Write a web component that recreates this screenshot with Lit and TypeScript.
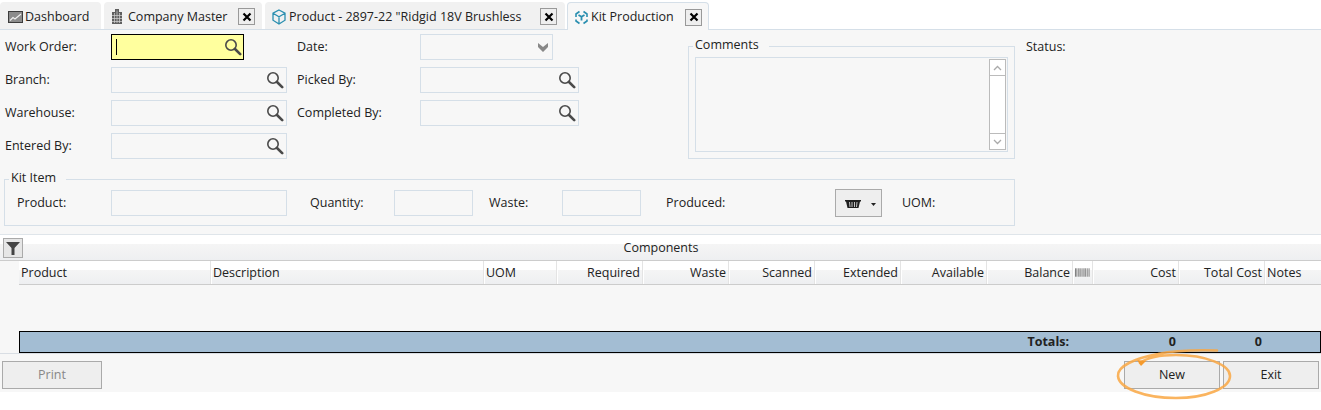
import { LitElement, html, css } from "lit";
import { customElement } from "lit/decorators.js";

const search = html`<svg class="search" width="18" height="18" viewBox="0 0 18 18"><circle cx="7" cy="7" r="5.200" fill="none" stroke="#4a4a4a" stroke-width="1.600"/><path d="M11 11l5.200 5.200" stroke="#4a4a4a" stroke-width="2.600" stroke-linecap="round"/></svg>`;
const cube = html`<svg class="ti m3" width="14" height="16" viewBox="0 0 14 16"><path d="M7 1l6 3.200v7L7 15l-6-3.800v-7zM1 4.200l6 3.500 6-3.500M7 7.700V15" fill="none" stroke="#2a8fb0" stroke-width="1.300"/></svg>`;
const kit = html`<svg class="ti m3" width="13" height="15" viewBox="0 0 13 15"><path d="M4.500 1.500L1 4v3M8.500 1.500L12 4v3M1 9.500V11l3.500 2.500M12 9.500V11l-3.500 2.500" fill="none" stroke="#2a8fb0" stroke-width="1.600"/><path d="M3.500 5l3 1.800L9.500 5M6.500 6.800V10.500" fill="none" stroke="#2a8fb0" stroke-width="1.800"/></svg>`;
const chart = html`<svg class="ti" width="15" height="12" viewBox="0 0 15 12"><rect x=".5" y=".5" width="14" height="11" fill="#8c8c8c" stroke="#3c3c3c"/><path d="M2 9.500l3-3 2 1.500 6-5" fill="none" stroke="#f2f2f2" stroke-width="1.100"/></svg>`;
const bldg = html`<svg class="ti m6" width="10" height="15" viewBox="0 0 10 15"><path d="M3 0h4v3h3v12H0V3h3z" fill="#5f5f5f"/><path d="M2.500 4v10M5 1.500V14M7.500 4v10M0 6.500h10M0 9.500h10M0 12.500h10" stroke="#d6d6d6" stroke-width=".7"/></svg>`;
const close = html`<span class="x"><svg width="10" height="10" viewBox="0 0 10 10"><path d="M1.500 1.500l7 7M8.500 1.500l-7 7" stroke="#000" stroke-width="2.200"/></svg></span>`;

@customElement("app-root")
export class AppRoot extends LitElement {
  static styles = css`
    :host { display:block; width:1321px; height:410px; background:#fff; font:12.5px/16px "Open Sans","Noto Sans",sans-serif; color:#222; position:relative; overflow:hidden; }
    * { box-sizing:border-box; }
    .page { height:392px; background:#f7f7f7; }
    .tabs { height:30px; background:#fff; border-bottom:1px solid #d5dfe8; display:flex; padding-top:2px; }
    .tab { height:27px; background:#f1f1f1; border-radius:4px 4px 0 0; display:flex; align-items:center; padding:2px 0 0 8px; white-space:nowrap; margin-right:3px; }
    .tab.t1 { width:101px; }
    .tab.t2 { width:158px; }
    .tab.t3 { width:300px; margin-right:2px; padding-left:7px; }
    .tab.t4 { width:142px; height:28px; background:#f7f7f7; border:1px solid #d5dfe8; border-bottom:none; padding:1px 0 0 7px; }
    .ti { margin-right:2px; flex:none; }
    .m3 { margin-right:3px; }
    .m6 { margin-right:6px; }
    .x { width:17px; height:17px; border:1px solid #999; background:#eee; display:flex; align-items:center; justify-content:center; margin-left:auto; margin-right:7px; flex:none; }
    .t3 .x { margin-right:8px; }
    .t4 .x { margin-right:6px; }
    .top { display:flex; height:141px; padding:4px 0 0 5px; }
    .col { display:grid; row-gap:7px; align-content:start; grid-auto-rows:26px; align-items:center; }
    .c1 { grid-template-columns:106px 176px; width:292px; }
    .c2 { grid-template-columns:123px 159px; width:391px; }
    .in { height:26px; border:1px solid #d5dfe8; background:#f7f7f7; display:flex; align-items:center; justify-content:flex-end; padding-right:2px; }
    .search { flex:none; }
    .wo { width:133px; background:#ffff9e; border:1px solid #000; justify-content:space-between; padding-left:4px; padding-right:1px; }
    .caret { width:1px; height:16px; background:#000; }
    .date { width:133px; padding-right:3px; }
    fieldset { margin:0; min-width:0; border:1px solid #d5dfe8; }
    legend { padding:0 10px 0 2px; line-height:16px; position:relative; }
    .comments { width:327px; height:121px; margin-top:4px; padding:0 6px; }
    .comments legend { margin-left:-2px; top:-1px; }
    .ta { height:95px; width:313px; margin-top:3px; border:1px solid #d5dfe8; padding:1px; display:flex; justify-content:flex-end; }
    .sb { width:17px; border:1px solid #bbb; background:#fff; display:flex; flex-direction:column; justify-content:space-between; }
    .sb span { height:16px; display:flex; align-items:center; justify-content:center; }
    .sb span:first-child { border-bottom:1px solid #bbb; }
    .sb span:last-child { border-top:1px solid #bbb; }
    .status { margin:5px 0 0 11px; }
    .kit { margin:0 0 0 4px; width:1011px; height:55px; padding:3px 0 0 12px; display:flex; align-items:flex-start; }
    .kit legend { margin-left:-8px; top:-1px; }
    .kr { display:flex; align-items:center; height:26px; }
    .kit .in { flex:none; }
    .p { width:94px; }
    .q { width:84px; margin-left:23px; }
    .w { width:73px; margin-left:16px; }
    .pr { width:169px; margin-left:25px; }
    .u { margin-left:20px; }
    .w176 { width:176px; }
    .w79 { width:79px; }
    .kbtn { width:47px; height:28px; border:1px solid #aaa; background:#eee; display:flex; align-items:center; padding:2px 0 0 9px; gap:10px; flex:none; }
    .grid { margin-top:8px; }
    .ghead { height:27px; border-top:1px solid #dfe5ea; border-bottom:1px solid #ccc; background:linear-gradient(#fff 0,#fff 9px,#f5f5f5 9px,#eeeff1 100%); position:relative; display:flex; justify-content:center; line-height:26px; padding-left:1px; }
    .filter { position:absolute; left:3px; top:3px; width:20px; height:20px; border:1px solid #aaa; background:#e6e6e6; display:flex; align-items:center; justify-content:center; }
    .cols { display:flex; height:24px; margin-left:19px; border-bottom:1px solid #ccc; background:linear-gradient(#fff 0,#fff 9px,#f5f5f5 9px,#eeeff1 100%); }
    .cols div { border-right:1px solid #e4e4e4; box-shadow:1px 0 0 #fff; line-height:22px; padding:0 2px; white-space:nowrap; flex:none; display:flex; justify-content:flex-end; align-items:center; }
    .cols div.l { justify-content:flex-start; }
    .cols div:last-child { border-right:none; box-shadow:none; padding-left:2px; }
    .body { height:46px; }
    .totals { height:22px; margin-left:19px; border:1px solid #000; background:#a3bdd3; display:flex; align-items:center; font-weight:700; line-height:18px; }
    .totals span { flex:none; text-align:right; }
    .foot { border-top:1px solid #d9dee4; height:39px; padding:7px 2px 0 2px; display:flex; justify-content:flex-end; gap:3px; }
    .btn { width:96px; height:28px; border:1px solid #aaa; background:#eee; display:flex; align-items:center; justify-content:center; }
    .btn.print { width:100px; margin-right:auto; color:#888; }
    .ring { position:absolute; left:1110px; top:345px; pointer-events:none; }
  `;

  cols: [string, number, boolean?][] = [
    ["Product",192,true],["Description",273,true],["UOM",73,true],["Required",86],["Waste",86],["Scanned",86],["Extended",86],["Available",86],["Balance",86],["",20],["Cost",86],["Total Cost",86],["Notes",57,true],
  ];

  render() {
    return html`<div class="page">
      <div class="tabs">
        <div class="tab t1">${chart}Dashboard</div>
        <div class="tab t2">${bldg}Company Master${close}</div>
        <div class="tab t3">${cube}Product - 2897-22 "Ridgid 18V Brushless${close}</div>
        <div class="tab t4">${kit}Kit Production${close}</div>
      </div>
      <div class="top">
        <div class="col c1">
          <span>Work Order:</span><div class="in wo"><i class="caret"></i>${search}</div>
          <span>Branch:</span><div class="in">${search}</div>
          <span>Warehouse:</span><div class="in">${search}</div>
          <span>Entered By:</span><div class="in">${search}</div>
        </div>
        <div class="col c2">
          <span>Date:</span><div class="in date"><svg width="12" height="11" viewBox="0 0 12 11"><path d="M1 1l5 4 5-4v4l-5 5-5-5z" fill="#888"/></svg></div>
          <span>Picked By:</span><div class="in">${search}</div>
          <span>Completed By:</span><div class="in">${search}</div>
        </div>
        <fieldset class="comments"><legend>Comments</legend>
          <div class="ta"><div class="sb">
            <span><svg width="9" height="6" viewBox="0 0 9 6"><path d="M1 5l3.500-3.500L8 5" fill="none" stroke="#aaa" stroke-width="1.300"/></svg></span>
            <span><svg width="9" height="6" viewBox="0 0 9 6"><path d="M1 1l3.500 3.500L8 1" fill="none" stroke="#aaa" stroke-width="1.300"/></svg></span>
          </div></div>
        </fieldset>
        <div class="status">Status:</div>
      </div>
      <fieldset class="kit"><legend>Kit Item</legend>
        <div class="kr">
          <span class="p">Product:</span><div class="in w176"></div>
          <span class="q">Quantity:</span><div class="in w79"></div>
          <span class="w">Waste:</span><div class="in w79"></div>
          <span class="pr">Produced:</span>
          <div class="kbtn"><svg width="16" height="8" viewBox="0 0 16 8"><path d="M0 0h16v1.500h-1L13.500 8h-11L1 1.500H0z" fill="#1e1e1e"/><path d="M4.500 2l.5 5M7 2v5M9.500 2v5M12 2l-.5 5" stroke="#eee" stroke-width=".8"/></svg><svg width="5" height="3" viewBox="0 0 5 3"><path d="M0 0h5L2.500 3z" fill="#222"/></svg></div>
          <span class="u">UOM:</span>
        </div>
      </fieldset>
      <div class="grid">
        <div class="ghead"><span class="filter"><svg width="14" height="14" viewBox="0 0 14 14"><path d="M0 1h14L8.500 7v7h-3V7z" fill="#444"/></svg></span>Components</div>
        <div class="cols">${this.cols.map(([n,w,l]) => html`<div class=${l?"l":""} style="width:${w}px">${n || html`<svg width="16" height="9" viewBox="0 0 16 9"><path d="M.5 0v9M2 0v9M4 0v9M5.500 0v9M7.500 0v9M9.500 0v9M11 0v9M13 0v9M15 0v9" stroke="#777" stroke-width="1"/></svg>`}</div>`)}</div>
        <div class="body"></div>
        <div class="totals"><span style="width:1049px">Totals:</span><span style="width:107px">0</span><span style="width:86px">0</span></div>
      </div>
      <div class="foot">
        <div class="btn print">Print</div>
        <div class="btn">New</div>
        <div class="btn">Exit</div>
      </div>
    </div>
    <svg class="ring" width="130" height="60" viewBox="0 0 130 60">
      <path d="M107 5.500C88 5 62 6 48 9 26 13 7 21 8 31c1 12 26 22 58 22 30 0 54-10 54-22 0-11-24-21-54-21-14 0-28 2-36 8" fill="none" stroke="#f9a743" stroke-opacity=".85" stroke-width="2.600" stroke-linecap="round"/>
      <path d="M27 15l9 1-5 5z" fill="#f59a2c"/>
    </svg>`;
  }
}
